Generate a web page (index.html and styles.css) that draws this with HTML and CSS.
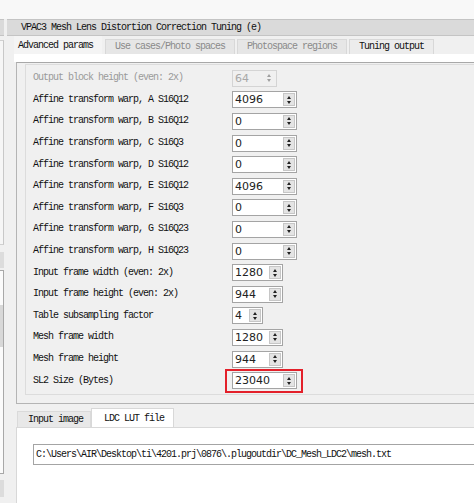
FILE: index.html
```html
<!DOCTYPE html>
<html>
<head>
<meta charset="utf-8">
<link rel="stylesheet" href="styles.css">
</head>
<body>
<div class="screen">
  <div class="topbar"></div>
  <div class="body">
    <aside class="side">
      <div class="s-head"></div>
      <div class="s-box1"></div>
      <div class="s-head2"></div>
      <div class="s-box2"><div class="s-sel"></div></div>
      <div class="s-foot"></div>
    </aside>
    <main class="main">
      <div class="title">VPAC3 Mesh Lens Distortion Correction Tuning (e)</div>
      <div class="tabs">
        <div class="tab active t1">Advanced params</div>
        <div class="tab">Use cases/Photo spaces</div>
        <div class="tab">Photospace regions</div>
        <div class="tab dark">Tuning output</div>
      </div>
      <div class="pane">
        <div class="pane-top"></div>
        <div class="scroll">
          <div class="form">
            <div class="row"><span class="lbl disabled">Output block height (even: 2x)</span><span class="spin w45 off"><span class="val">64</span><span class="btns"><i class="up"></i><i class="dn"></i></span></span></div>
            <div class="row"><span class="lbl">Affine transform warp, A S16Q12</span><span class="spin w65"><span class="val">4096</span><span class="btns"><i class="up"></i><i class="dn"></i></span></span></div>
            <div class="row"><span class="lbl">Affine transform warp, B S16Q12</span><span class="spin w65"><span class="val">0</span><span class="btns"><i class="up"></i><i class="dn"></i></span></span></div>
            <div class="row"><span class="lbl">Affine transform warp, C S16Q3</span><span class="spin w65"><span class="val">0</span><span class="btns"><i class="up"></i><i class="dn"></i></span></span></div>
            <div class="row"><span class="lbl">Affine transform warp, D S16Q12</span><span class="spin w65"><span class="val">0</span><span class="btns"><i class="up"></i><i class="dn"></i></span></span></div>
            <div class="row"><span class="lbl">Affine transform warp, E S16Q12</span><span class="spin w65"><span class="val">4096</span><span class="btns"><i class="up"></i><i class="dn"></i></span></span></div>
            <div class="row"><span class="lbl">Affine transform warp, F S16Q3</span><span class="spin w65"><span class="val">0</span><span class="btns"><i class="up"></i><i class="dn"></i></span></span></div>
            <div class="row"><span class="lbl">Affine transform warp, G S16Q23</span><span class="spin w65"><span class="val">0</span><span class="btns"><i class="up"></i><i class="dn"></i></span></span></div>
            <div class="row"><span class="lbl">Affine transform warp, H S16Q23</span><span class="spin w65"><span class="val">0</span><span class="btns"><i class="up"></i><i class="dn"></i></span></span></div>
            <div class="row"><span class="lbl">Input frame width (even: 2x)</span><span class="spin w51"><span class="val">1280</span><span class="btns"><i class="up"></i><i class="dn"></i></span></span></div>
            <div class="row"><span class="lbl">Input frame height (even: 2x)</span><span class="spin w51"><span class="val">944</span><span class="btns"><i class="up"></i><i class="dn"></i></span></span></div>
            <div class="row"><span class="lbl">Table subsampling factor</span><span class="spin w31"><span class="val">4</span><span class="btns"><i class="up"></i><i class="dn"></i></span></span></div>
            <div class="row"><span class="lbl">Mesh frame width</span><span class="spin w51"><span class="val">1280</span><span class="btns"><i class="up"></i><i class="dn"></i></span></span></div>
            <div class="row"><span class="lbl">Mesh frame height</span><span class="spin w51"><span class="val">944</span><span class="btns"><i class="up"></i><i class="dn"></i></span></span></div>
            <div class="row"><span class="lbl">SL2 Size (Bytes)</span><span class="hl"><span class="spin w65"><span class="val">23040</span><span class="btns"><i class="up"></i><i class="dn"></i></span></span></span></div>
          </div>
        </div>
      </div>
      <div class="tabs2">
        <div class="tab2">Input image</div>
        <div class="tab2 active">LDC LUT file</div>
      </div>
      <div class="pane2">
        <div class="path">C:\Users\AIR\Desktop\ti\4201.prj\0876\.plugoutdir\DC_Mesh_LDC2\mesh.txt</div>
      </div>
    </main>
  </div>
</div>
</body>
</html>
```
FILE: styles.css
```css
html, body {
  margin: 0;
  padding: 0;
  background: #f0f0f0;
}
.screen {
  width: 474px;
  height: 503px;
  overflow: hidden;
  display: flex;
  flex-direction: column;
}
.topbar {
  height: 19px;
  flex: none;
  background: #f8f8f8;
}
.body {
  flex: 1;
  display: flex;
  min-height: 0;
}
.side {
  width: 4px;
  flex: none;
  margin-right: 3px;
  display: flex;
  flex-direction: column;
}
.s-head {
  height: 17px;
  box-sizing: border-box;
  background: #dadada;
  border-top: 1px solid #c4c4c4;
  border-bottom: 1px solid #c4c4c4;
}
.s-box1 {
  margin-top: 4px;
  height: 205px;
  box-sizing: border-box;
  background: #f6f6f6;
  border-right: 1px solid #c8c8c8;
  border-top: 1px solid #d0d0d0;
  border-bottom: 1px solid #d0d0d0;
}
.s-head2 {
  margin-top: 7px;
  height: 16px;
  background: #dcdcdc;
}
.s-box2 {
  margin-top: 2px;
  height: 204px;
  box-sizing: border-box;
  background: #fbfbfb;
  border: 1px solid #a8a8a8;
  border-left: none;
  padding-top: 34px;
}
.s-sel {
  height: 42px;
  background: #d8d8d8;
}
.s-foot {
  margin-top: 6px;
  height: 17px;
  background: #dcdcdc;
}
.main {
  flex: 1;
  min-width: 0;
  display: flex;
  flex-direction: column;
  font-family: "Liberation Mono", "DejaVu Sans Mono", monospace;
  font-size: 10px;
  letter-spacing: -1px;
  color: #111;
}
.title {
  height: 17px;
  box-sizing: border-box;
  background: #dadada;
  border-top: 1px solid #c4c4c4;
  border-bottom: 1px solid #c4c4c4;
  line-height: 15px;
  padding-left: 14px;
  white-space: nowrap;
}
.tabs {
  height: 18px;
  flex: none;
  display: flex;
  align-items: flex-end;
  gap: 2px;
  padding-left: 7px;
}
.tab {
  height: 15px;
  box-sizing: border-box;
  line-height: 14px;
  padding: 0 9px;
  background: #e6e6e6;
  border: 1px solid #d8d8d8;
  border-bottom: none;
  color: #8a8a8a;
  white-space: nowrap;
}
.tab.dark {
  color: #111;
  background: #ececec;
}
.tab.active {
  height: 18px;
  line-height: 17px;
  background: #f4f4f4;
  color: #111;
  border-color: #f4f4f4;
  padding: 0 8px 0 3px;
  margin-right: 1px;
}
.pane {
  margin-left: 7px;
  display: flex;
  flex-direction: column;
}
.pane-top {
  height: 8px;
  background: #fff;
}
.scroll {
  margin-left: 2px;
  height: 342px;
  box-sizing: border-box;
  background: #f0f0f0;
  border-top: 1px solid #a8a8a8;
  border-left: 1px solid #b4b4b4;
  border-bottom: 1px solid #b4b4b4;
  padding: 1px 0 7px 8px;
}
.form {
  height: 331px;
  box-sizing: border-box;
  border: 1px solid #dcdcdc;
  border-right: none;
  padding: 2.5px 0 0 7px;
  display: grid;
  grid-template-columns: 199px auto;
  grid-auto-rows: 21.6px;
}
.row {
  display: contents;
}
.lbl {
  align-self: center;
  white-space: nowrap;
  line-height: 12px;
}
.lbl.disabled {
  color: #9a9a9a;
}
.spin {
  align-self: center;
  justify-self: start;
  height: 17px;
  box-sizing: border-box;
  border: 1px solid #a4a4a4;
  background: #fff;
  display: flex;
  font-family: "DejaVu Sans", Verdana, sans-serif;
  font-size: 11px;
  letter-spacing: 0;
  color: #222;
}
.w65 { width: 65px; }
.w51 { width: 51px; }
.w45 { width: 45px; }
.w31 { width: 31px; }
.val {
  flex: 1;
  line-height: 15px;
  padding-left: 2px;
}
.btns {
  width: 12px;
  margin: 1px 1px 1px 0;
  box-sizing: border-box;
  background: #e4e4e4;
  border: 1px solid #c6c6c6;
  display: flex;
  flex-direction: column;
  align-items: center;
  justify-content: center;
  gap: 2px;
}
.up, .dn {
  display: block;
  width: 0;
  height: 0;
  border-left: 2.5px solid transparent;
  border-right: 2.5px solid transparent;
}
.up { border-bottom: 3px solid #222; }
.dn { border-top: 3px solid #222; }
.spin.off {
  background: #f0f0f0;
  border-color: #d4d4d4;
  color: #a8a8a8;
}
.spin.off .btns {
  background: transparent;
  border-color: transparent;
}
.spin.off .up { border-bottom-color: #a0a0a0; }
.spin.off .dn { border-top-color: #a0a0a0; }
.hl {
  position: relative;
  align-self: center;
  justify-self: start;
  display: flex;
}
.hl::after {
  content: "";
  position: absolute;
  left: -7px;
  right: -6px;
  top: -3px;
  bottom: -4px;
  border: 2px solid #e3202a;
}
.tabs2 {
  margin-top: 1px;
  height: 23px;
  flex: none;
  display: flex;
  align-items: flex-end;
  padding-left: 10px;
}
.tab2 {
  height: 17px;
  box-sizing: border-box;
  line-height: 16px;
  padding: 0 7px 0 10px;
  background: #e8e8e8;
  border: 1px solid #dadada;
  border-bottom: none;
  white-space: nowrap;
}
.tab2.active {
  height: 20px;
  line-height: 19px;
  background: #fff;
  border-color: #d8d8d8;
  padding: 0 9px 0 12px;
}
.pane2 {
  flex: 1;
  margin-left: 9px;
  background: #fff;
  border-left: 1px solid #d8d8d8;
  border-top: 1px solid #d8d8d8;
  margin-top: -1px;
  padding: 16px 0 0 16px;
}
.path {
  height: 21px;
  box-sizing: border-box;
  border: 1px solid #a4a4a4;
  border-right: none;
  line-height: 19px;
  padding-left: 2px;
  white-space: nowrap;
  background: #fff;
}
```
